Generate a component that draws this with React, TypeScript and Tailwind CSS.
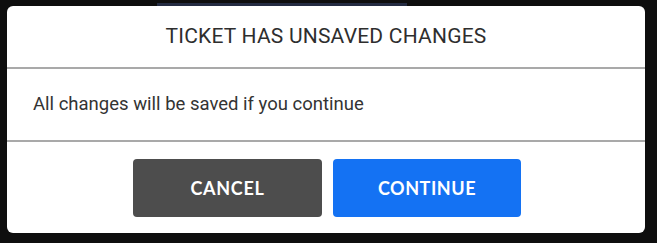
export default function App() {
  return (
    <div className="h-[243px] w-[657px] bg-[#0e0e0e] pl-[7px] pr-[12px] pb-[10px] pt-[3px] flex flex-col">
      <div className="h-[3px] ml-[150px] w-[250px] bg-[#2a3550] opacity-80" />
      <div className="flex-1 bg-white rounded-[6px] flex flex-col overflow-hidden">
        <div className="h-[61px] flex items-center justify-center font-['Roboto',sans-serif] text-[21px] text-[#2e2e2e] tracking-[0.01em]">
          TICKET HAS UNSAVED CHANGES
        </div>
        <div className="h-[2px] bg-[#a9a9a9]" />
        <div className="h-[71px] flex items-center pl-[26px] font-['Roboto',sans-serif] text-[18.5px] text-[#333]">
          All changes will be saved if you continue
        </div>
        <div className="h-[2px] bg-[#a9a9a9]" />
        <div className="flex-1 flex justify-center gap-[11px] pt-[17px] pl-[2px]">
          <button className="w-[189px] h-[58px] rounded-[4px] bg-[#4d4d4d] text-white font-['Lato',sans-serif] font-bold text-[18px] tracking-[0.04em]">
            CANCEL
          </button>
          <button className="w-[188px] h-[58px] rounded-[4px] bg-[#1472f3] text-white font-['Lato',sans-serif] font-bold text-[18px] tracking-[0.03em]">
            CONTINUE
          </button>
        </div>
      </div>
    </div>
  );
}
